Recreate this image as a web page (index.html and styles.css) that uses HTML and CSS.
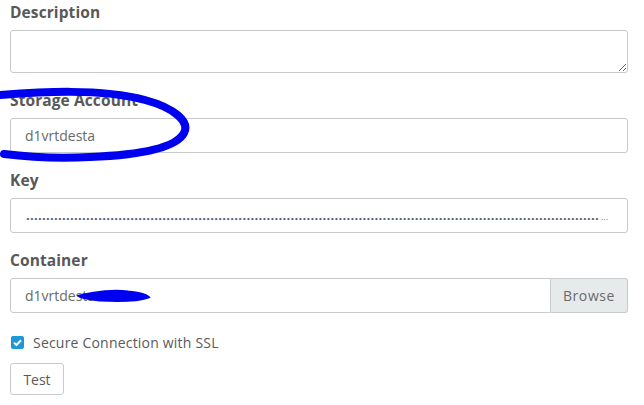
FILE: index.html
```html
<!DOCTYPE html>
<html>
<head>
<meta charset="utf-8">
<link rel="stylesheet" href="styles.css">
</head>
<body>
<form class="form">
  <div class="field">
    <label class="label">Description</label>
    <textarea class="textarea"></textarea>
  </div>
  <div class="field">
    <label class="label">Storage Account</label>
    <div class="input">d1vrtdesta</div>
  </div>
  <div class="field">
    <label class="label">Key</label>
    <div class="input key"><span class="dots">................................................................................................................................................................</span><span class="more">...</span></div>
  </div>
  <div class="field">
    <label class="label">Container</label>
    <div class="group">
      <div class="input grow">d1vrtdesta</div>
      <div class="browse">Browse</div>
    </div>
  </div>
  <div class="check-row">
    <span class="checkbox"><svg viewBox="0 0 13 13" width="13" height="13"><path d="M3 6.6 L5.4 9 L10 4.2" fill="none" stroke="#fff" stroke-width="2"/></svg></span>
    <span class="check-label">Secure Connection with SSL</span>
  </div>
  <div class="btn-row"><button type="button" class="btn">Test</button></div>
</form>
<svg class="scribble" width="644" height="405" viewBox="0 0 644 405">
  <path d="M0 95 C 40 92, 100 88, 145 100 C 175 108, 190 122, 184 133 C 176 148, 140 155, 90 157 C 50 159, 20 156, 4 154" fill="none" stroke="#0000f0" stroke-width="8" stroke-linecap="round"/>
  <path d="M80 296 C 95 292, 115 290, 128 292 C 138 293, 146 295, 148 297 C 140 300, 120 301, 100 300 C 90 299, 83 298, 80 296 Z" fill="#0000f0" stroke="#0000f0" stroke-width="3"/>
</svg>
</body>
</html>
```
FILE: styles.css
```css
html, body {
  margin: 0;
  padding: 0;
  background: #fff;
}
body {
  font-family: "Open Sans", "Liberation Sans", sans-serif;
  width: 644px;
  height: 405px;
  overflow: hidden;
  position: relative;
}
.form {
  padding: 2px 16px 0 10px;
  display: flex;
  flex-direction: column;
}
.field {
  display: flex;
  flex-direction: column;
  margin-bottom: 17px;
}
.label {
  font-size: 15.5px;
  font-weight: 700;
  color: #585858;
  line-height: 20px;
  height: 20px;
  margin-bottom: 8px;
  letter-spacing: 0.1px;
}
.textarea {
  box-sizing: border-box;
  height: 43px;
  width: 618px;
  border: 1px solid #c7cbcd;
  border-radius: 3px;
  margin: 0;
  padding: 4px 14px;
  font-family: inherit;
  font-size: 14px;
  resize: vertical;
  outline: none;
}
.input {
  box-sizing: border-box;
  height: 35px;
  border: 1px solid #c7cbcd;
  border-radius: 3px;
  padding: 0 14px;
  font-size: 14px;
  color: #6a6a6a;
  line-height: 33px;
  white-space: nowrap;
}
.key {
  display: flex;
  padding-left: 15px;
  padding-right: 17px;
  color: #4d5b72;
}
.dots {
  display: block;
  width: 573px;
  flex: none;
  overflow: hidden;
  font-weight: 700;
  font-size: 13px;
  letter-spacing: 0.3px;
}
.more {
  flex: none;
  font-size: 9px;
  color: #777;
  margin-left: 2px;
  line-height: 36px;
}
.group {
  display: flex;
  height: 35px;
}
.grow {
  flex: 1;
  border-radius: 3px 0 0 3px;
}
.browse {
  box-sizing: border-box;
  width: 77px;
  height: 35px;
  border: 1px solid #c7cbcd;
  border-left: none;
  border-radius: 0 3px 3px 0;
  background: #e6eaea;
  color: #6a6a6a;
  font-size: 14px;
  letter-spacing: 0.6px;
  line-height: 33px;
  text-align: center;
}
.check-row {
  display: flex;
  align-items: center;
  height: 20px;
  margin-top: 2px;
  gap: 9px;
}
.checkbox {
  width: 13px;
  height: 13px;
  background: #1b98d5;
  border-radius: 2px;
  display: flex;
  margin-left: 1px;
}
.check-label {
  font-size: 14px;
  color: #5a5a5a;
  letter-spacing: 0.2px;
}
.btn-row {
  margin-top: 11px;
  display: flex;
}
.btn {
  box-sizing: border-box;
  width: 54px;
  height: 32px;
  background: #fff;
  border: 1px solid #c7cbcd;
  border-radius: 3px;
  font-family: inherit;
  font-size: 14px;
  color: #5a5a5a;
  padding: 0;
}
.scribble {
  position: absolute;
  left: 0;
  top: 0;
  pointer-events: none;
}
```
